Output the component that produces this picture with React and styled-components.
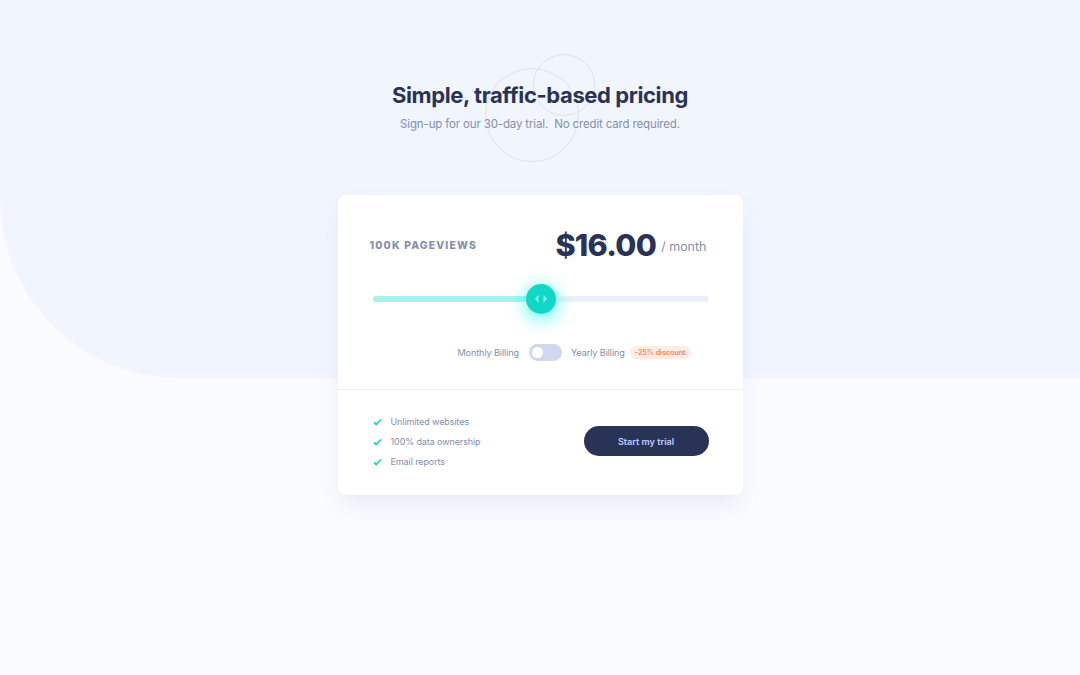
import React from "react"
import styled, { createGlobalStyle } from "styled-components"

const GlobalStyle = createGlobalStyle`
    * { box-sizing: border-box; }
    html, body {
        margin: 0;
        padding: 0;
        background: #fafbff;
        font-family: "Inter", "Noto Sans", sans-serif;
    }
`

const features = ["Unlimited websites", "100% data ownership", "Email reports"]

export default function App() {
    return <Page>
        <GlobalStyle />
        <Header>
            <Circles width="130" height="130" viewBox="0 0 130 130" fill="none">
                <circle cx="47" cy="61" r="46.5" stroke="#dfe3ee" strokeWidth="1" />
                <circle cx="79" cy="31" r="30.5" stroke="#dfe3ee" strokeWidth="1" />
            </Circles>
            <Title>Simple, traffic-based pricing</Title>
            <Subtitle>Sign-up for our 30-day trial.&nbsp; No credit card required.</Subtitle>
        </Header>

        <Card>
            <CardTop>
                <PriceRow>
                    <Views>100K Pageviews</Views>
                    <Price>
                        <Amount>$16.00</Amount>
                        <Period>/ month</Period>
                    </Price>
                </PriceRow>

                <Slider>
                    <Track>
                        <Fill style={{ width: "50%" }} />
                    </Track>
                    <Thumb>
                        <svg width="12" height="8" viewBox="0 0 12 8">
                            <path d="M3.5 0v8L0 4z M8.5 0v8L12 4z" fill="#80FFF3" />
                        </svg>
                    </Thumb>
                </Slider>

                <BillingRow>
                    <BillingLabel>Monthly Billing</BillingLabel>
                    <Toggle><Knob /></Toggle>
                    <BillingLabel>Yearly Billing</BillingLabel>
                    <Discount>-25% discount</Discount>
                </BillingRow>
            </CardTop>

            <CardBottom>
                <FeatureList>
                    {features.map(item =>
                        <Feature key={item}>
                            <svg width="9" height="8" viewBox="0 0 9 8">
                                <path d="M1 4.3l2.2 2.2L8 1.5" stroke="#10D8C4" strokeWidth="1.8" fill="none" />
                            </svg>
                            {item}
                        </Feature>
                    )}
                </FeatureList>
                <TrialButton>Start my trial</TrialButton>
            </CardBottom>
        </Card>
    </Page>
}

const Page = styled.main`
    position: relative;
    min-height: 675px;
    display: flex;
    flex-direction: column;
    align-items: center;
    padding-top: 80px;

    &::before {
        content: "";
        position: absolute;
        top: 0;
        left: 0;
        right: 0;
        height: 378px;
        background: #f1f5fe;
        border-bottom-left-radius: 180px;
        z-index: 0;
    }
`
const Header = styled.header`
    position: relative;
    z-index: 1;
    display: flex;
    flex-direction: column;
    align-items: center;
    margin-bottom: 61px;
`
const Circles = styled.svg`
    position: absolute;
    top: -26px;
    left: 50%;
    margin-left: -55px;
`
const Title = styled.h1`
    position: relative;
    margin: 0;
    font-size: 22px;
    line-height: 30px;
    font-weight: 700;
    color: #293356;
    letter-spacing: -0.4px;
`
const Subtitle = styled.p`
    position: relative;
    margin: 4px 0 0;
    font-size: 11.5px;
    line-height: 20px;
    color: #858fad;
    letter-spacing: -0.15px;
`
const Card = styled.section`
    position: relative;
    z-index: 1;
    width: 405px;
    background: #ffffff;
    border-radius: 8px;
    box-shadow: 0 12px 24px -6px rgba(127, 137, 185, 0.18);
`
const CardTop = styled.div`
    padding: 30px 36px 28px 32px;
    border-bottom: 1px solid #ecf0fb;
`
const PriceRow = styled.div`
    display: flex;
    justify-content: space-between;
    align-items: center;
    height: 40px;
`
const Views = styled.span`
    font-size: 10.3px;
    font-weight: 800;
    letter-spacing: 1.2px;
    text-transform: uppercase;
    color: #858fad;
`
const Price = styled.div`
    display: flex;
    align-items: center;
    gap: 5px;
`
const Amount = styled.span`
    font-size: 30.5px;
    line-height: 40px;
    font-weight: 800;
    color: #293356;
    letter-spacing: -0.7px;
`
const Period = styled.span`
    font-size: 12.5px;
    color: #858fad;
    padding-top: 2px;
`
const Slider = styled.div`
    position: relative;
    margin: 19px -2px 0 3px;
    height: 30px;
    display: flex;
    align-items: center;
`
const Track = styled.div`
    width: 100%;
    height: 6px;
    border-radius: 3px;
    background: #ecf0fb;
    overflow: hidden;
`
const Fill = styled.div`
    height: 100%;
    background: #a5f3eb;
`
const Thumb = styled.div`
    position: absolute;
    left: 50%;
    top: 0;
    transform: translateX(-50%);
    width: 30px;
    height: 30px;
    border-radius: 50%;
    background: #10d8c4;
    box-shadow: 0 4px 16px 3px rgba(0, 255, 231, 0.5);
    display: flex;
    align-items: center;
    justify-content: center;
`
const BillingRow = styled.div`
    display: flex;
    align-items: center;
    margin: 30px 0 0 88px;
    white-space: nowrap;
`
const BillingLabel = styled.span`
    font-size: 9.1px;
    color: #858fad;
    letter-spacing: -0.1px;
`
const Toggle = styled.div`
    width: 33px;
    height: 17px;
    border-radius: 9px;
    background: #cfd8ef;
    margin: 0 9px 0 10px;
    padding: 3px;
    display: flex;
    align-items: center;
`
const Knob = styled.div`
    width: 11px;
    height: 11px;
    border-radius: 50%;
    background: #ffffff;
`
const Discount = styled.span`
    margin-left: 5px;
    padding: 2px 5px;
    border-radius: 8px;
    background: #feece7;
    color: #ff8d68;
    font-size: 7.2px;
    font-weight: 700;
    letter-spacing: -0.1px;
`
const CardBottom = styled.div`
    display: flex;
    justify-content: space-between;
    align-items: center;
    padding: 25px 34px 26px 35px;
`
const FeatureList = styled.ul`
    list-style: none;
    margin: 0;
    padding: 0;
    display: flex;
    flex-direction: column;
    gap: 6px;
`
const Feature = styled.li`
    display: flex;
    align-items: center;
    gap: 9px;
    font-size: 9px;
    line-height: 14px;
    color: #858fad;
    letter-spacing: -0.1px;
`
const TrialButton = styled.button`
    width: 125px;
    height: 30px;
    margin-top: -2px;
    border: none;
    border-radius: 15px;
    background: #293356;
    color: #bdccff;
    font-family: inherit;
    font-size: 9.1px;
    font-weight: 600;
    cursor: pointer;
`
